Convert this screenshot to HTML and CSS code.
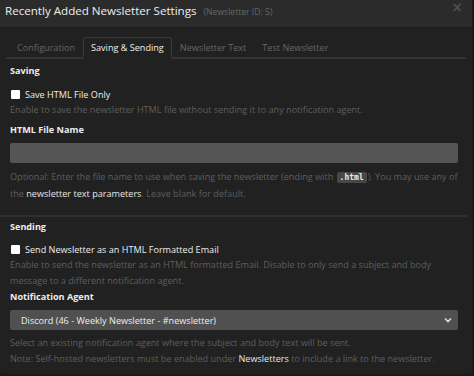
FILE: index.html
```html
<!DOCTYPE html>
<html lang="en">
<head>
  <meta charset="UTF-8" />
  <title>Recently Added Newsletter Settings</title>
  <link rel="stylesheet" href="styles.css">
</head>
<body>
  <div class="modal">
    <div class="modal-header">
      <h4 class="modal-title">Recently Added Newsletter Settings <span class="sub">(Newsletter ID: 5)</span></h4>
      <button class="close" type="button">&times;</button>
    </div>

    <div class="modal-body">
      <ul class="tabs">
        <li class="tab">Configuration</li>
        <li class="tab active">Saving &amp; Sending</li>
        <li class="tab">Newsletter Text</li>
        <li class="tab">Test Newsletter</li>
      </ul>

      <div class="section saving">
        <div class="heading">Saving</div>
        <label class="check"><span class="box"></span> Save HTML File Only</label>
        <p class="help">Enable to save the newsletter HTML file without sending it to any notification agent.</p>

        <div class="field-label">HTML File Name</div>
        <div class="input"></div>
        <p class="help after-input">Optional: Enter the file name to use when saving the newsletter (ending with <code>.html</code>). You may use any of the <a href="#">newsletter text parameters</a>. Leave blank for default.</p>
      </div>

      <hr class="divider" />

      <div class="section sending">
        <div class="heading">Sending</div>
        <label class="check"><span class="box"></span> Send Newsletter as an HTML Formatted Email</label>
        <p class="help">Enable to send the newsletter as an HTML formatted Email. Disable to only send a subject and body message to a different notification agent.</p>

        <div class="field-label">Notification Agent</div>
        <div class="select">
          <span>Discord (46 - Weekly Newsletter - #newsletter)</span>
          <svg class="chev" width="8" height="6" viewBox="0 0 8 6"><path d="M1 1.5 L4 4.5 L7 1.5" fill="none" stroke="#ddd" stroke-width="1.6"/></svg>
        </div>
        <p class="help after-input">Select an existing notification agent where the subject and body text will be sent.<br>Note: Self-hosted newsletters must be enabled under <a href="#">Newsletters</a> to include a link to the newsletter.</p>
      </div>
    </div>
  </div>
</body>
</html>
```

FILE: styles.css
```css
* {
  box-sizing: border-box;
}

html, body {
  margin: 0;
  padding: 0;
  height: 100%;
  background: #1a1a1a;
  font-family: 'Open Sans', 'Noto Sans', sans-serif;
  overflow: hidden;
}

.modal {
  width: 472px;
  height: 374px;
  background: #212121;
  border-radius: 0 0 4px 4px;
  overflow: hidden;
}

.modal-header {
  display: flex;
  align-items: flex-start;
  justify-content: space-between;
  height: 28px;
  padding: 3px 7px 0 5px;
  background: #2b2b2b;
  border-bottom: 1px solid #1c1c1c;
}

.modal-title {
  margin: 0;
  font-size: 11.6px;
  line-height: 16px;
  font-weight: 400;
  color: #eee;
  white-space: nowrap;
}

.sub {
  font-size: 8.6px;
  color: #666;
  margin-left: 4px;
}

.close {
  background: none;
  border: none;
  color: #4d4d4d;
  font-size: 14px;
  line-height: 1;
  padding: 0 2px;
  margin-top: -3px;
  font-family: 'DejaVu Sans', sans-serif;
  font-weight: bold;
}

.modal-body {
  padding: 9px 6px 0 6px;
}

.tabs {
  display: flex;
  list-style: none;
  margin: 0;
  padding: 0;
  border-bottom: 2px solid #333;
}

.tab {
  font-size: 9.1px;
  line-height: 12px;
  color: #666;
  padding: 4px 7px 3px;
  margin-bottom: -2px;
  border: 1px solid transparent;
  border-bottom: none;
  border-radius: 3px 3px 0 0;
}

.tab:first-child {
  padding-left: 10px;
}

.tab.active {
  color: #eee;
  background: #212121;
  border-color: #383838;
  border-bottom: 2px solid #212121;
}

.section {
  padding: 0 4px;
}

.saving {
  padding-top: 5px;
}

.sending {
  padding-top: 3px;
}

.heading,
.field-label {
  font-size: 9.1px;
  line-height: 14px;
  font-weight: 700;
  color: #eee;
}

.heading {
  margin-bottom: 8px;
}

.saving .heading {
  margin-bottom: 9px;
}

.check {
  display: flex;
  align-items: center;
  gap: 5px;
  height: 14px;
  padding-left: 1px;
  font-size: 9.1px;
  color: #eee;
}

.box {
  width: 9px;
  height: 9px;
  background: #fff;
  border-radius: 1px;
}

.help {
  margin: 1px 0 5px;
  font-size: 9.1px;
  line-height: 16px;
  color: #5e5e5e;
}

.sending .help {
  margin-bottom: 1px;
}

.help.after-input {
  margin-top: 6px;
}

.sending .help.after-input {
  margin-top: 5px;
}

.help a {
  color: #e6e6e6;
  font-weight: 500;
  text-decoration: none;
}

code {
  font-family: 'DejaVu Sans Mono', monospace;
  font-weight: bold;
  font-size: 8px;
  color: #eee;
  background: #474747;
  border-radius: 2px;
  padding: 1px 3px;
  margin: 0 1px;
}

.field-label {
  margin-bottom: 6px;
}

.input,
.select {
  height: 20px;
  width: 448px;
  background: #555;
  border-radius: 2px;
}

.select {
  display: flex;
  align-items: center;
  justify-content: space-between;
  padding: 0 6px 0 11px;
  font-size: 9.1px;
  color: #eee;
  background: #505050;
}

.divider {
  width: 468px;
  margin: 13px 0 0 -6px;
  border: none;
  border-top: 2px solid #2e2e2e;
}
```
